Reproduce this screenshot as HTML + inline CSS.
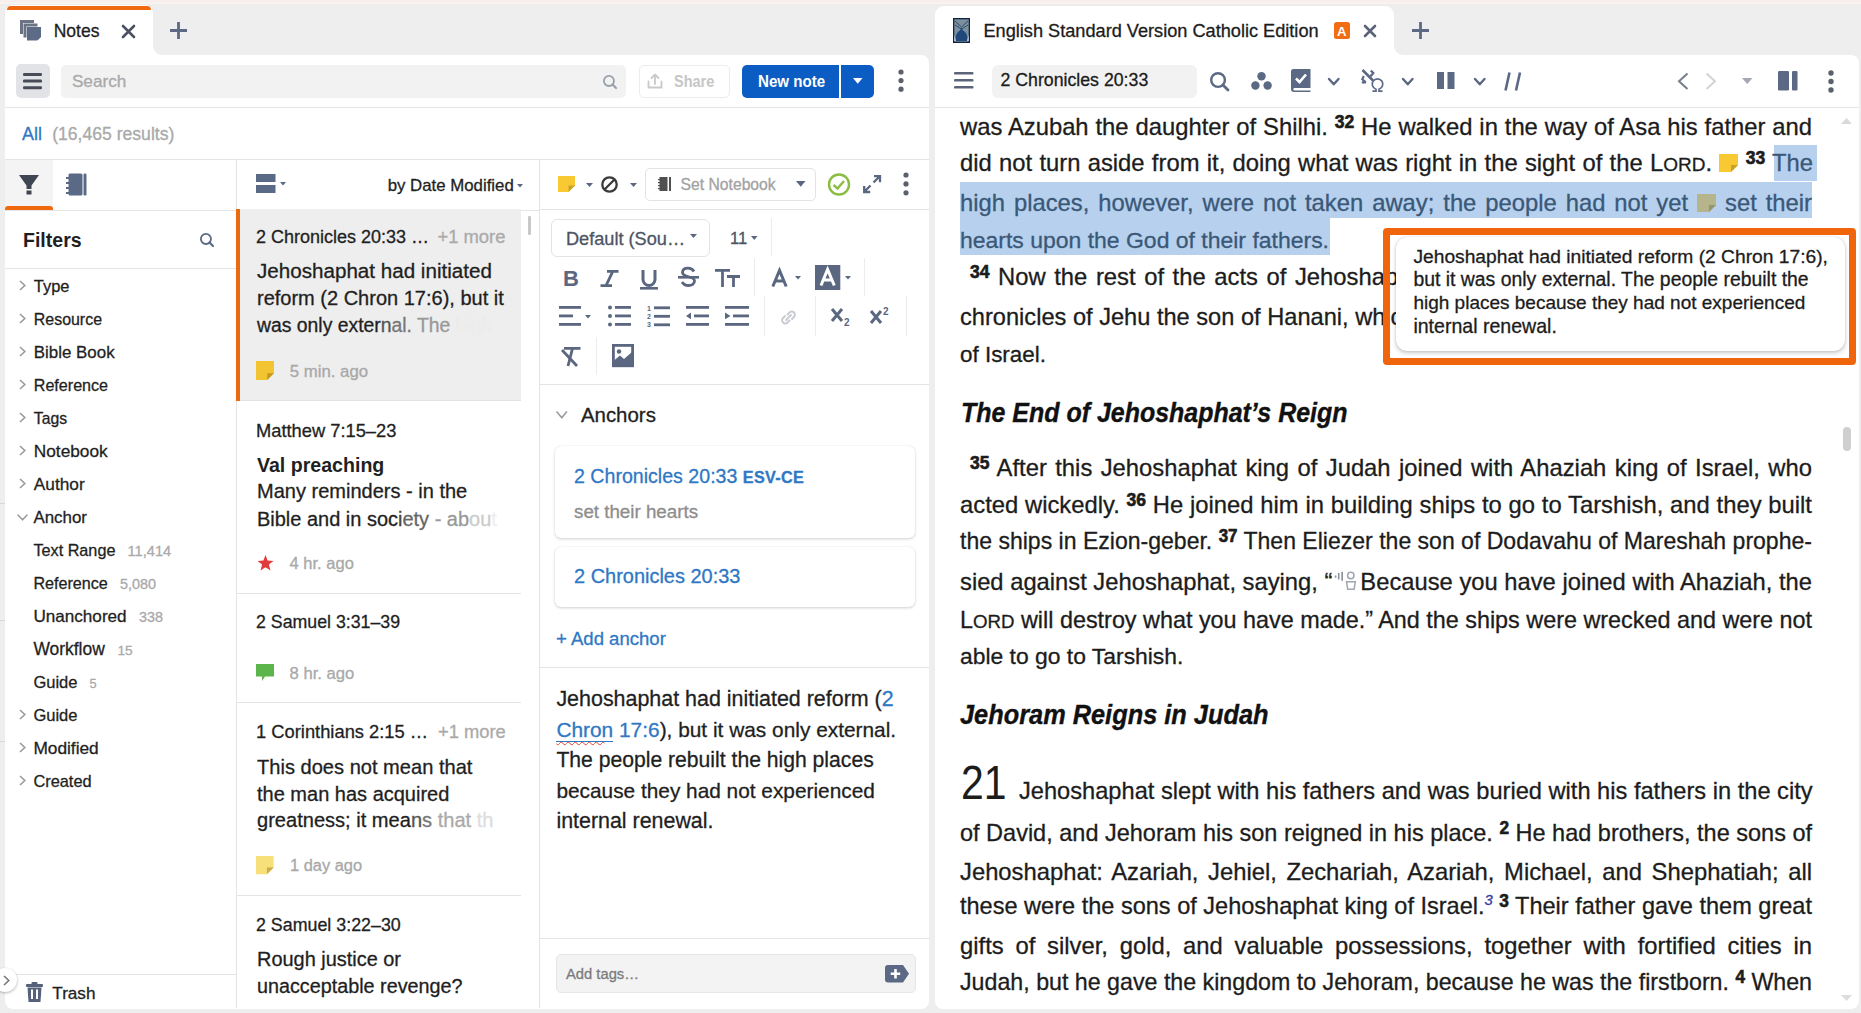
<!DOCTYPE html>
<html><head><meta charset="utf-8"><style>html,body{margin:0;padding:0}
body{width:1861px;height:1013px;position:relative;overflow:hidden;background:#eeeeee;font-family:"Liberation Sans",sans-serif}
.b{position:absolute}
.ic{position:absolute;overflow:visible}
.t{position:absolute;white-space:nowrap;line-height:1;transform-origin:0 0;-webkit-text-stroke-width:0.3px}
.bl{display:inline-block;width:0;height:0}
.sup{font-size:17.5px;font-weight:700;position:relative;top:-7px;-webkit-text-stroke-width:0.6px}
.sc{font-size:19px}
.stk{display:inline-block;position:relative;width:19px;height:0}
.stk svg{position:absolute;left:0;top:-17px}
.fn{font-style:italic;color:#3a3aa0;font-size:15px;position:relative;top:-9px}
</style></head><body>
<div class="b" style="left:0;top:0;width:1861px;height:6px;background:linear-gradient(#f9eeeb 0,#f9eeeb 1.5px,#f7f3ef 2px,#f7f3ef 3.5px,#efebe9 4px,#eeeeee 6px)"></div>
<div class="b" style="left:5px;top:55px;width:924.00px;height:954.00px;background:#fff;border-radius:0 8px 8px 8px;"></div>
<div class="b" style="left:5px;top:5px;width:148.00px;height:55.00px;background:#fff;border-radius:8px 8px 0 0;"></div>
<div class="b" style="left:7px;top:5.5px;width:144.00px;height:4.00px;background:#f0690f;border-radius:4px 4px 0 0;"></div>
<div class="b" style="left:153px;top:45px;width:12px;height:12px;background:#fff"></div>
<div class="b" style="left:153px;top:5px;width:776px;height:50px;background:#eeeeee;border-radius:0 0 0 9px"></div>
<svg class="ic" style="left:20px;top:20px;" width="23" height="21" viewBox="0 0 23 21"><rect x="0" y="0" width="14" height="14" fill="#6b7385"/><rect x="3" y="3" width="14" height="14" fill="#fff"/><rect x="3.5" y="3.5" width="14" height="14" fill="#6b7385"/><rect x="6.5" y="6.5" width="14" height="14" fill="#fff"/><path d="M7 7H21V16.5L17 20.5H7Z" fill="#5d6b87"/><path d="M21 17L17.5 20.5V17Z" fill="#5d6b87"/></svg>
<div class="t " style="left:53.70px;top:23.00px;font-size:17.53px;color:#1f1f1f;">Notes</div>
<svg class="ic" style="left:122px;top:24.5px;" width="13" height="13" viewBox="0 0 13 13"><path d="M1 1L12 12M12 1L1 12" stroke="#4b5161" stroke-width="2.6" stroke-linecap="round"/></svg>
<svg class="ic" style="left:170px;top:22px;" width="17" height="17" viewBox="0 0 17 17"><path d="M8.5 0V17M0 8.5H17" stroke="#5b6984" stroke-width="2.8"/></svg>
<div class="b" style="left:16px;top:64px;width:34px;height:34px;background:#e2e3e6;border-radius:5px"></div>
<svg class="ic" style="left:23px;top:73px;" width="19" height="17" viewBox="0 0 19 17"><rect x="0" y="0.0" width="19" height="3" rx="1.2" fill="#474c58"/><rect x="0" y="6.6" width="19" height="3" rx="1.2" fill="#474c58"/><rect x="0" y="13.2" width="19" height="3" rx="1.2" fill="#474c58"/></svg>
<div class="b" style="left:61px;top:64.5px;width:565.00px;height:33.00px;background:#f2f2f2;border-radius:5px;"></div>
<div class="t " style="left:71.90px;top:73.01px;font-size:17.20px;color:#a9a9a9;">Search</div>
<svg class="ic" style="left:602.5px;top:74.5px;" width="14" height="14" viewBox="0 0 14 14"><circle cx="5.94" cy="5.94" r="5.04" stroke="#9aa0aa" stroke-width="1.8" fill="none"/><path d="M9.5688 9.5688L13 13" stroke="#9aa0aa" stroke-width="2.2" stroke-linecap="round"/></svg>
<div class="b" style="left:638.5px;top:64.5px;width:91.00px;height:33.00px;border:1px solid #ececec;border-radius:5px;box-sizing:border-box;"></div>
<svg class="ic" style="left:647px;top:73px;" width="16" height="16" viewBox="0 0 16 16"><path d="M8 11V1.5M4.5 5L8 1.5L11.5 5" stroke="#c9c9c9" stroke-width="1.8" fill="none" stroke-linecap="round" stroke-linejoin="round"/><path d="M1.5 8.5V14.5H14.5V8.5" stroke="#c9c9c9" stroke-width="1.8" fill="none" stroke-linecap="round" stroke-linejoin="round"/></svg>
<div class="t " style="left:673.70px;top:73.50px;font-size:15.63px;color:#c6c6c6;font-weight:700;-webkit-text-stroke-width:0;transform:scaleX(0.9278);">Share</div>
<div class="b" style="left:741.5px;top:64.5px;width:97.00px;height:33.00px;background:#0b5dc4;border-radius:5px 0 0 5px;"></div>
<div class="b" style="left:841px;top:64.5px;width:32.50px;height:33.00px;background:#0b5dc4;border-radius:0 5px 5px 0;"></div>
<div class="t " style="left:757.60px;top:73.51px;font-size:16.01px;color:#ffffff;font-weight:700;-webkit-text-stroke-width:0;transform:scaleX(0.9434);">New note</div>
<svg class="ic" style="left:852.5px;top:78px;" width="9.5" height="5.8" viewBox="0 0 9.5 5.8"><path d="M0 0H9.5L4.75 5.8Z" fill="#ffffff"/></svg>
<svg class="ic" style="left:897px;top:68px;" width="8" height="26" viewBox="0 0 8 26"><circle cx="4" cy="4.0" r="2.6" fill="#5a606c"/><circle cx="4" cy="12.6" r="2.6" fill="#5a606c"/><circle cx="4" cy="21.2" r="2.6" fill="#5a606c"/></svg>
<div class="b" style="left:5px;top:107px;width:924.00px;height:1.00px;background:#e4e4e4;"></div>
<div class="t " style="left:22.00px;top:125.71px;font-size:17.90px;color:#2f78c4;">All</div>
<div class="t " style="left:52.20px;top:125.72px;font-size:17.59px;color:#a9a9a9;">(16,465 results)</div>
<div class="b" style="left:5px;top:159px;width:924.00px;height:1.00px;background:#e4e4e4;"></div>
<div class="b" style="left:236px;top:160px;width:1.00px;height:848.00px;background:#e4e4e4;"></div>
<div class="b" style="left:539px;top:160px;width:1.00px;height:848.00px;background:#e4e4e4;"></div>
<div class="b" style="left:5px;top:210px;width:534.00px;height:1.00px;background:#e4e4e4;"></div>
<div class="b" style="left:540px;top:209px;width:389.00px;height:1.00px;background:#e4e4e4;"></div>
<div class="b" style="left:5px;top:160px;width:48.00px;height:50.00px;background:#f4f4f4;"></div>
<div class="b" style="left:5px;top:206px;width:48.00px;height:4.00px;background:#f0690f;border-radius:3px 3px 0 0;"></div>
<svg class="ic" style="left:18.5px;top:174.5px;" width="20" height="20" viewBox="0 0 20 20"><path d="M0 0H20L12.5 10.5V14H7.5V10.5Z" fill="#3f4552"/><rect x="7.5" y="15.5" width="5" height="4" fill="#3f4552"/></svg>
<svg class="ic" style="left:66px;top:173px;" width="21" height="23" viewBox="0 0 21 23"><rect x="2.5" y="0.5" width="14" height="22" rx="1.5" fill="#5a6985"/><rect x="17.5" y="0.5" width="3" height="22" rx="1.2" fill="#5a6985"/><rect x="0" y="4" width="4" height="2" fill="#5a6985"/><rect x="0" y="9" width="4" height="2" fill="#5a6985"/><rect x="0" y="14" width="4" height="2" fill="#5a6985"/><rect x="0" y="19" width="4" height="2" fill="#5a6985"/></svg>
<div class="t " style="left:23.00px;top:230.91px;font-size:19.84px;color:#1f1f1f;font-weight:700;-webkit-text-stroke-width:0;transform:scaleX(0.9846);">Filters</div>
<svg class="ic" style="left:199.5px;top:232.5px;" width="14" height="14" viewBox="0 0 14 14"><circle cx="5.94" cy="5.94" r="5.04" stroke="#5b6984" stroke-width="1.8" fill="none"/><path d="M9.5688 9.5688L13 13" stroke="#5b6984" stroke-width="2.2" stroke-linecap="round"/></svg>
<div class="b" style="left:5px;top:268px;width:231.00px;height:1.00px;background:#e4e4e4;"></div>
<div class="t " style="left:33.80px;top:277.91px;font-size:16.48px;color:#1f1f1f;">Type</div>
<svg class="ic" style="left:19px;top:280.4px;" width="7" height="11" viewBox="0 0 7 11"><path d="M1 1L5.8 5.5L1 10" stroke="#9b9b9b" stroke-width="1.6" fill="none"/></svg>
<div class="t " style="left:33.80px;top:311.91px;font-size:15.95px;color:#1f1f1f;">Resource</div>
<svg class="ic" style="left:19px;top:313.4px;" width="7" height="11" viewBox="0 0 7 11"><path d="M1 1L5.8 5.5L1 10" stroke="#9b9b9b" stroke-width="1.6" fill="none"/></svg>
<div class="t " style="left:33.80px;top:344.90px;font-size:16.92px;color:#1f1f1f;">Bible Book</div>
<svg class="ic" style="left:19px;top:346.4px;" width="7" height="11" viewBox="0 0 7 11"><path d="M1 1L5.8 5.5L1 10" stroke="#9b9b9b" stroke-width="1.6" fill="none"/></svg>
<div class="t " style="left:33.80px;top:376.91px;font-size:16.10px;color:#1f1f1f;">Reference</div>
<svg class="ic" style="left:19px;top:379.4px;" width="7" height="11" viewBox="0 0 7 11"><path d="M1 1L5.8 5.5L1 10" stroke="#9b9b9b" stroke-width="1.6" fill="none"/></svg>
<div class="t " style="left:33.80px;top:410.90px;font-size:15.73px;color:#1f1f1f;">Tags</div>
<svg class="ic" style="left:19px;top:412.4px;" width="7" height="11" viewBox="0 0 7 11"><path d="M1 1L5.8 5.5L1 10" stroke="#9b9b9b" stroke-width="1.6" fill="none"/></svg>
<div class="t " style="left:33.80px;top:442.91px;font-size:17.28px;color:#1f1f1f;">Notebook</div>
<svg class="ic" style="left:19px;top:445.4px;" width="7" height="11" viewBox="0 0 7 11"><path d="M1 1L5.8 5.5L1 10" stroke="#9b9b9b" stroke-width="1.6" fill="none"/></svg>
<div class="t " style="left:33.80px;top:475.91px;font-size:17.26px;color:#1f1f1f;">Author</div>
<svg class="ic" style="left:19px;top:478.4px;" width="7" height="11" viewBox="0 0 7 11"><path d="M1 1L5.8 5.5L1 10" stroke="#9b9b9b" stroke-width="1.6" fill="none"/></svg>
<div class="t " style="left:33.40px;top:509.90px;font-size:16.93px;color:#1f1f1f;">Anchor</div>
<svg class="ic" style="left:17px;top:513.9px;" width="11" height="7" viewBox="0 0 11 7"><path d="M1 1L5.5 5.8L10 1" stroke="#9b9b9b" stroke-width="1.6" fill="none" stroke-linecap="round" stroke-linejoin="round"/></svg>
<div class="t " style="left:33.40px;top:541.91px;font-size:16.23px;color:#1f1f1f;">Text Range</div>
<div class="t " style="left:127.60px;top:543.91px;font-size:14.58px;color:#a9a9a9;">11,414</div>
<div class="t " style="left:33.40px;top:574.90px;font-size:16.14px;color:#1f1f1f;">Reference</div>
<div class="t " style="left:120.00px;top:576.91px;font-size:14.38px;color:#a9a9a9;">5,080</div>
<div class="t " style="left:33.40px;top:607.90px;font-size:17.12px;color:#1f1f1f;">Unanchored</div>
<div class="t " style="left:139.00px;top:609.91px;font-size:14.38px;color:#a9a9a9;">338</div>
<div class="t " style="left:33.40px;top:640.91px;font-size:17.46px;color:#1f1f1f;">Workflow</div>
<div class="t " style="left:117.50px;top:643.91px;font-size:13.66px;color:#a9a9a9;">15</div>
<div class="t " style="left:33.40px;top:674.91px;font-size:16.54px;color:#1f1f1f;">Guide</div>
<div class="t " style="left:89.60px;top:677.90px;font-size:12.76px;color:#a9a9a9;">5</div>
<div class="t " style="left:33.40px;top:707.91px;font-size:16.54px;color:#1f1f1f;">Guide</div>
<svg class="ic" style="left:19px;top:709.4px;" width="7" height="11" viewBox="0 0 7 11"><path d="M1 1L5.8 5.5L1 10" stroke="#9b9b9b" stroke-width="1.6" fill="none"/></svg>
<div class="t " style="left:33.40px;top:739.91px;font-size:17.29px;color:#1f1f1f;">Modified</div>
<svg class="ic" style="left:19px;top:742.4px;" width="7" height="11" viewBox="0 0 7 11"><path d="M1 1L5.8 5.5L1 10" stroke="#9b9b9b" stroke-width="1.6" fill="none"/></svg>
<div class="t " style="left:33.40px;top:772.91px;font-size:16.37px;color:#1f1f1f;">Created</div>
<svg class="ic" style="left:19px;top:775.4px;" width="7" height="11" viewBox="0 0 7 11"><path d="M1 1L5.8 5.5L1 10" stroke="#9b9b9b" stroke-width="1.6" fill="none"/></svg>
<div class="b" style="left:5px;top:974px;width:231.00px;height:1.00px;background:#e4e4e4;"></div>
<svg class="ic" style="left:26px;top:982px;" width="17" height="20" viewBox="0 0 17 20"><rect x="0" y="2" width="17" height="3" rx="1" fill="#56627a"/><rect x="5.5" y="0" width="6" height="3" rx="1" fill="#56627a"/><path d="M1.5 5.5H15.5L14.5 20H2.5Z" fill="#56627a"/><rect x="5" y="7.5" width="2" height="9.5" fill="#fff"/><rect x="10" y="7.5" width="2" height="9.5" fill="#fff"/></svg>
<div class="t " style="left:52.30px;top:984.70px;font-size:17.15px;color:#1f1f1f;">Trash</div>
<div class="b" style="left:-7px;top:968px;width:24px;height:24px;border-radius:50%;background:#fff;box-shadow:0 1px 3px rgba(0,0,0,0.3)"></div>
<svg class="ic" style="left:3px;top:974.5px;" width="7" height="11" viewBox="0 0 7 11"><path d="M1 1L5.8 5.5L1 10" stroke="#777" stroke-width="1.6" fill="none"/></svg>
<div class="b" style="left:0px;top:503px;width:5.00px;height:1.00px;background:#d8d8d8;"></div>
<div class="b" style="left:0px;top:620px;width:5.00px;height:1.00px;background:#d8d8d8;"></div>
<div class="b" style="left:0px;top:741px;width:5.00px;height:1.00px;background:#d8d8d8;"></div>
<svg class="ic" style="left:255.7px;top:173.7px;" width="19.5" height="19" viewBox="0 0 19.5 19"><rect x="0" y="0" width="19.5" height="8" fill="#5a6985"/><rect x="0" y="11" width="19.5" height="8" fill="#5a6985"/></svg>
<svg class="ic" style="left:280px;top:182px;" width="6" height="3.5" viewBox="0 0 6 3.5"><path d="M0 0H6L3.0 3.5Z" fill="#5a6985"/></svg>
<div class="t " style="left:387.70px;top:177.81px;font-size:16.81px;color:#1f1f1f;">by Date Modified</div>
<svg class="ic" style="left:517px;top:184px;" width="6" height="3.5" viewBox="0 0 6 3.5"><path d="M0 0H6L3.0 3.5Z" fill="#5a6985"/></svg>
<div class="b" style="left:236px;top:209px;width:285.00px;height:192.00px;background:#eeeeee;border-bottom:1px solid #e2e2e2;box-sizing:border-box;"></div>
<div class="b" style="left:236px;top:209px;width:4.00px;height:192.00px;background:#ea6a12;"></div>
<div class="b" style="left:528px;top:216px;width:2.50px;height:19.00px;background:#c8c8c8;border-radius:1px;"></div>
<div class="t " style="left:256.00px;top:228.40px;font-size:18.01px;color:#1f1f1f;">2 Chronicles 20:33 …</div>
<div class="t " style="left:437.40px;top:228.42px;font-size:18.41px;color:#aaaaaa;">+1 more</div>
<div class="t " style="left:257.00px;top:260.80px;font-size:20.62px;color:#1f1f1f;">Jehoshaphat had initiated</div>
<div class="t " style="left:257.00px;top:287.51px;font-size:20.00px;color:#1f1f1f;">reform (2 Chron 17:6), but it</div>
<div class="t " style="left:257.00px;top:315.81px;font-size:19.37px;color:#1f1f1f;">was only exter<span style="color:#555">n</span><span style="color:#777">al.</span> <span style="color:#999">The</span> <span style="color:#ececec">high</span></div>
<svg class="ic" style="left:256px;top:361px;" width="18" height="19" viewBox="0 0 18 19"><path d="M0 0H18V12.16L11.16 19H0Z" fill="#f2c431"/><path d="M18 12.16L11.16 19V12.16Z" fill="#c49a20"/></svg>
<div class="t " style="left:289.80px;top:363.80px;font-size:16.76px;color:#a8a8a8;">5 min. ago</div>
<div class="t " style="left:256.00px;top:421.50px;font-size:18.31px;color:#1f1f1f;">Matthew 7:15–23</div>
<div class="t " style="left:257.00px;top:455.90px;font-size:19.59px;color:#1f1f1f;font-weight:700;-webkit-text-stroke-width:0;">Val preaching</div>
<div class="t " style="left:257.00px;top:481.21px;font-size:20.03px;color:#1f1f1f;">Many reminders - in the</div>
<div class="t " style="left:257.00px;top:508.61px;font-size:19.98px;color:#1f1f1f;">Bible and in soc<span style="color:#444">i</span><span style="color:#666">ety</span> <span style="color:#999">- ab</span><span style="color:#ccc">ou</span><span style="color:#eee">t</span></div>
<svg class="ic" style="left:256.5px;top:555px;" width="17" height="16" viewBox="0 0 17 16"><path d="M8.5 0L10.6 5.5L16.5 5.9L11.9 9.6L13.5 15.5L8.5 12.2L3.5 15.5L5.1 9.6L0.5 5.9L6.4 5.5Z" fill="#e23b3b"/></svg>
<div class="t " style="left:289.60px;top:555.01px;font-size:16.51px;color:#a8a8a8;">4 hr. ago</div>
<div class="b" style="left:236px;top:593px;width:285.00px;height:1.00px;background:#e4e4e4;"></div>
<div class="t " style="left:256.00px;top:614.41px;font-size:17.76px;color:#1f1f1f;">2 Samuel 3:31–39</div>
<svg class="ic" style="left:256px;top:664px;" width="18" height="18" viewBox="0 0 18 18"><path d="M0 0H18V12.5H9L6 17V12.5H0Z" fill="#5cb54a"/></svg>
<div class="t " style="left:289.60px;top:665.80px;font-size:16.64px;color:#a8a8a8;">8 hr. ago</div>
<div class="b" style="left:236px;top:702px;width:285.00px;height:1.00px;background:#e4e4e4;"></div>
<div class="t " style="left:256.00px;top:723.30px;font-size:18.33px;color:#1f1f1f;">1 Corinthians 2:15 …</div>
<div class="t " style="left:438.00px;top:723.32px;font-size:18.33px;color:#aaaaaa;">+1 more</div>
<div class="t " style="left:257.00px;top:756.60px;font-size:20.09px;color:#1f1f1f;">This does not mean that</div>
<div class="t " style="left:257.00px;top:783.60px;font-size:20.01px;color:#1f1f1f;">the man has acquired</div>
<div class="t " style="left:257.00px;top:810.41px;font-size:20.07px;color:#1f1f1f;">greatness; it mea<span style="color:#555">n</span><span style="color:#777">s</span> <span style="color:#aaa">that</span> <span style="color:#ddd">th</span></div>
<svg class="ic" style="left:256.3px;top:856px;" width="17.6" height="18.3" viewBox="0 0 17.6 18.3"><path d="M0 0H17.6V11.612L10.912 18.3H0Z" fill="#f7df7a"/><path d="M17.6 11.612L10.912 18.3V11.612Z" fill="#c9ae4a"/></svg>
<div class="t " style="left:290.00px;top:857.41px;font-size:16.41px;color:#a8a8a8;">1 day ago</div>
<div class="b" style="left:236px;top:895px;width:285.00px;height:1.00px;background:#e4e4e4;"></div>
<div class="t " style="left:256.00px;top:916.91px;font-size:17.83px;color:#1f1f1f;">2 Samuel 3:22–30</div>
<div class="t " style="left:257.00px;top:950.11px;font-size:19.93px;color:#1f1f1f;">Rough justice or</div>
<div class="t " style="left:257.00px;top:976.50px;font-size:19.78px;color:#1f1f1f;">unacceptable revenge?</div>
<svg class="ic" style="left:558px;top:176px;" width="17" height="16" viewBox="0 0 17 16"><path d="M0 0H17V9.54L10.54 16H0Z" fill="#f9c934"/><path d="M17 9.54L10.54 16V9.54Z" fill="#c9a227"/></svg>
<svg class="ic" style="left:586px;top:183px;" width="7" height="4" viewBox="0 0 7 4"><path d="M0 0H7L3.5 4Z" fill="#5b6780"/></svg>
<svg class="ic" style="left:601px;top:176px;" width="17" height="17" viewBox="0 0 17 17"><circle cx="8.5" cy="8.5" r="7.2" stroke="#3a3a3a" stroke-width="2.3" fill="none"/><path d="M3.5 13.5L13.5 3.5" stroke="#3a3a3a" stroke-width="2.3"/></svg>
<svg class="ic" style="left:630px;top:183px;" width="7" height="4" viewBox="0 0 7 4"><path d="M0 0H7L3.5 4Z" fill="#5b6780"/></svg>
<div class="b" style="left:645.3px;top:167.5px;width:171.00px;height:33.10px;border:1px solid #e3e3e3;border-radius:5px;box-sizing:border-box;"></div>
<svg class="ic" style="left:657.5px;top:177px;" width="14" height="14" viewBox="0 0 14 14"><rect x="1.5" y="0" width="8" height="14" fill="#505050"/><rect x="11" y="0" width="2" height="14" fill="#505050"/><rect x="0" y="2" width="2.5" height="1.2" fill="#505050"/><rect x="0" y="5" width="2.5" height="1.2" fill="#505050"/><rect x="0" y="8" width="2.5" height="1.2" fill="#505050"/><rect x="0" y="11" width="2.5" height="1.2" fill="#505050"/></svg>
<div class="t " style="left:680.60px;top:176.71px;font-size:15.69px;color:#a2a2a2;">Set Notebook</div>
<svg class="ic" style="left:796px;top:181px;" width="9.5" height="5.7" viewBox="0 0 9.5 5.7"><path d="M0 0H9.5L4.75 5.7Z" fill="#5b6780"/></svg>
<svg class="ic" style="left:827.5px;top:172.5px;" width="22" height="23" viewBox="0 0 22 23"><circle cx="11" cy="11.5" r="10" stroke="#8cbd43" stroke-width="2.4" fill="none"/><path d="M5.5 12L9.5 15.5L16 8" stroke="#8cbd43" stroke-width="2.4" fill="none"/></svg>
<svg class="ic" style="left:863px;top:175px;" width="18" height="18" viewBox="0 0 18 18"><path d="M10.5 7.5L16.5 1.5M11 1.2H17V7.2" stroke="#5b6780" stroke-width="2.3" fill="none"/><path d="M7.5 10.5L1.5 16.5M1.2 11V17H7.2" stroke="#5b6780" stroke-width="2.3" fill="none"/></svg>
<svg class="ic" style="left:901.6px;top:171px;" width="8" height="26" viewBox="0 0 8 26"><circle cx="4" cy="4.0" r="2.6" fill="#5a606c"/><circle cx="4" cy="12.9" r="2.6" fill="#5a606c"/><circle cx="4" cy="21.8" r="2.6" fill="#5a606c"/></svg>
<div class="b" style="left:551.4px;top:218.5px;width:158.80px;height:38.50px;border:1px solid #e3e3e3;border-radius:6px;box-sizing:border-box;"></div>
<div class="t " style="left:566.00px;top:229.91px;font-size:18.16px;color:#4d5462;">Default (Sou…</div>
<svg class="ic" style="left:690px;top:234px;" width="7" height="4" viewBox="0 0 7 4"><path d="M0 0H7L3.5 4Z" fill="#5b6780"/></svg>
<div class="t " style="left:730.00px;top:231.31px;font-size:16.58px;color:#4d5462;">11</div>
<svg class="ic" style="left:751.3px;top:236px;" width="6.5" height="4" viewBox="0 0 6.5 4"><path d="M0 0H6.5L3.25 4Z" fill="#5b6780"/></svg>
<div class="b" style="left:771.4px;top:218px;width:1.00px;height:38.00px;background:#ececec;"></div>
<div class="b" style="left:753.9px;top:257.5px;width:1.00px;height:38.00px;background:#ececec;"></div>
<div class="b" style="left:863.6px;top:257.5px;width:1.00px;height:38.00px;background:#ececec;"></div>
<div class="b" style="left:763.7px;top:295.5px;width:1.00px;height:40.20px;background:#ececec;"></div>
<div class="b" style="left:814.7px;top:295.5px;width:1.00px;height:40.20px;background:#ececec;"></div>
<div class="b" style="left:905.9px;top:295.5px;width:1.00px;height:40.20px;background:#ececec;"></div>
<div class="b" style="left:596px;top:336.8px;width:1.00px;height:38.00px;background:#ececec;"></div>
<svg class="ic" style="left:562.8px;top:269.5px;" width="15" height="17" viewBox="0 0 15 17"><text x="0" y="16.3" font-family="Liberation Sans" font-weight="700" font-size="22" fill="#5b6780">B</text></svg>
<svg class="ic" style="left:600px;top:269.5px;" width="19" height="17" viewBox="0 0 19 17"><path d="M7 1.3H18.5M0.5 15.7H12M12.8 1.3L6 15.7" stroke="#5b6780" stroke-width="2.8" fill="none"/></svg>
<svg class="ic" style="left:639.5px;top:269.5px;" width="18" height="20" viewBox="0 0 18 20"><path d="M3 0V9.5A6 6 0 0 0 15 9.5V0" stroke="#5b6780" stroke-width="3" fill="none"/><rect x="0" y="17" width="18" height="2.6" fill="#5b6780"/></svg>
<svg class="ic" style="left:677.5px;top:266.5px;" width="21" height="20" viewBox="0 0 21 20"><path d="M16 4.5C14.5 1.8 12.5 1.2 10 1.2C6.5 1.2 4.5 3 4.5 5.5C4.5 11 16.5 8.5 16.5 14C16.5 16.8 14 18.5 10.5 18.5C7.5 18.5 5.5 17.5 4 15" stroke="#5b6780" stroke-width="2.8" fill="none"/><rect x="0" y="9" width="21" height="2.6" fill="#5b6780"/></svg>
<svg class="ic" style="left:714.5px;top:269px;" width="26" height="19" viewBox="0 0 26 19"><path d="M0 1.3H15M7.5 1.3V18" stroke="#5b6780" stroke-width="2.8"/><path d="M12 7.5H25M18.5 7.5V18" stroke="#5b6780" stroke-width="2.8"/></svg>
<svg class="ic" style="left:772px;top:269.5px;" width="15" height="17" viewBox="0 0 15 17"><path d="M0.8 16.5L7.5 0.5L14.2 16.5M3.5 11H11.5" stroke="#5b6780" stroke-width="3" fill="none"/></svg>
<svg class="ic" style="left:795px;top:276px;" width="6" height="3.5" viewBox="0 0 6 3.5"><path d="M0 0H6L3.0 3.5Z" fill="#5b6780"/></svg>
<svg class="ic" style="left:814.7px;top:264.7px;" width="25.3" height="25" viewBox="0 0 25.3 25"><rect width="25.3" height="25" fill="#5b6780"/><path d="M6 20.5L12.6 4.5L19.3 20.5M8.8 15H16.5" stroke="#fff" stroke-width="3" fill="none"/></svg>
<svg class="ic" style="left:845px;top:276px;" width="6" height="3.5" viewBox="0 0 6 3.5"><path d="M0 0H6L3.0 3.5Z" fill="#5b6780"/></svg>
<svg class="ic" style="left:559px;top:306.4px;" width="23" height="20" viewBox="0 0 23 20"><rect x="0" y="0" width="22" height="2.8" fill="#5b6780"/><rect x="0" y="8.5" width="14" height="2.8" fill="#5b6780"/><rect x="0" y="17" width="22" height="2.8" fill="#5b6780"/></svg>
<svg class="ic" style="left:584.5px;top:315px;" width="6" height="3.5" viewBox="0 0 6 3.5"><path d="M0 0H6L3.0 3.5Z" fill="#5b6780"/></svg>
<svg class="ic" style="left:607.8px;top:306.4px;" width="23" height="20" viewBox="0 0 23 20"><circle cx="2" cy="1.5" r="2" fill="#5b6780"/><circle cx="2" cy="10" r="2" fill="#5b6780"/><circle cx="2" cy="18.5" r="2" fill="#5b6780"/><rect x="7" y="0" width="16" height="2.8" fill="#5b6780"/><rect x="7" y="8.5" width="16" height="2.8" fill="#5b6780"/><rect x="7" y="17" width="16" height="2.8" fill="#5b6780"/></svg>
<svg class="ic" style="left:646.8px;top:305px;" width="23" height="22" viewBox="0 0 23 22"><text x="0" y="6" font-family="Liberation Sans" font-weight="700" font-size="7" fill="#5b6780">1</text><text x="0" y="14" font-family="Liberation Sans" font-weight="700" font-size="7" fill="#5b6780">2</text><text x="0" y="22" font-family="Liberation Sans" font-weight="700" font-size="7" fill="#5b6780">3</text><rect x="7" y="1.4" width="16" height="2.8" fill="#5b6780"/><rect x="7" y="9.9" width="16" height="2.8" fill="#5b6780"/><rect x="7" y="18.4" width="16" height="2.8" fill="#5b6780"/></svg>
<svg class="ic" style="left:685.9px;top:306.4px;" width="23" height="20" viewBox="0 0 23 20"><rect x="0" y="0" width="23" height="2.8" fill="#5b6780"/><rect x="8" y="8.5" width="15" height="2.8" fill="#5b6780"/><rect x="0" y="17" width="23" height="2.8" fill="#5b6780"/><path d="M0 9.9L5 6.5V13.3Z" fill="#5b6780"/></svg>
<svg class="ic" style="left:725px;top:306.4px;" width="24" height="20" viewBox="0 0 24 20"><rect x="0" y="0" width="24" height="2.8" fill="#5b6780"/><rect x="8" y="8.5" width="16" height="2.8" fill="#5b6780"/><rect x="0" y="17" width="24" height="2.8" fill="#5b6780"/><path d="M5.5 9.9L0 6.5V13.3Z" fill="#5b6780"/></svg>
<svg class="ic" style="left:780px;top:308.6px;" width="17" height="17" viewBox="0 0 17 17"><path d="M7.5 5.5L9.5 3.5A3 3 0 0 1 14 8L12 10M9.5 11.5L7.5 13.5A3 3 0 0 1 3 9L5 7M6 11L11 6" stroke="#c8ccd4" stroke-width="2" fill="none" stroke-linecap="round"/></svg>
<svg class="ic" style="left:831px;top:307px;" width="22" height="20" viewBox="0 0 22 20"><path d="M1 2L11 14M11 2L1 14" stroke="#5b6780" stroke-width="3"/><text x="13" y="19" font-family="Liberation Sans" font-weight="700" font-size="10" fill="#5b6780">2</text></svg>
<svg class="ic" style="left:870px;top:305px;" width="22" height="20" viewBox="0 0 22 20"><path d="M1 6L11 18M11 6L1 18" stroke="#5b6780" stroke-width="3"/><text x="13" y="10" font-family="Liberation Sans" font-weight="700" font-size="10" fill="#5b6780">2</text></svg>
<svg class="ic" style="left:560.6px;top:346.6px;" width="21" height="20" viewBox="0 0 21 20"><path d="M3 1.4H19.5M11.5 1.4L7 19" stroke="#5b6780" stroke-width="2.8"/><path d="M1 3L16 19" stroke="#5b6780" stroke-width="2.8"/></svg>
<svg class="ic" style="left:611.7px;top:344.4px;" width="22" height="23.2" viewBox="0 0 22 23.2"><rect x="1.4" y="1.4" width="19.2" height="20.4" stroke="#5b6780" stroke-width="2.8" fill="none"/><circle cx="7" cy="7.5" r="2.2" fill="#5b6780"/><path d="M1.4 21.8V17L8 11.5L12 15L20.6 7.5V21.8Z" fill="#5b6780"/></svg>
<div class="b" style="left:540px;top:384px;width:389.00px;height:1.00px;background:#e4e4e4;"></div>
<svg class="ic" style="left:555.5px;top:411px;" width="11.5" height="8" viewBox="0 0 11.5 8"><path d="M1 1L5.75 6.8L10.5 1" stroke="#9aa0a8" stroke-width="1.7" fill="none" stroke-linecap="round" stroke-linejoin="round"/></svg>
<div class="t " style="left:580.90px;top:405.11px;font-size:20.45px;color:#1f1f1f;">Anchors</div>
<div class="b" style="left:555.2px;top:445.6px;width:359.40px;height:92.60px;background:#fff;border-radius:6px;box-shadow:0 1px 3px rgba(0,0,0,0.18),0 0 1px rgba(0,0,0,0.12);"></div>
<div class="b" style="left:555.2px;top:546.5px;width:359.40px;height:60.30px;background:#fff;border-radius:6px;box-shadow:0 1px 3px rgba(0,0,0,0.18),0 0 1px rgba(0,0,0,0.12);"></div>
<div class="t " style="left:574.00px;top:466.91px;font-size:19.97px;color:#2f78c4;transform:scaleX(0.9819);">2 Chronicles 20:33 <span style="font-size:16.5px;font-weight:700;letter-spacing:0.3px">ESV-CE</span></div>
<div class="t " style="left:574.00px;top:502.51px;font-size:18.75px;color:#8d8d8d;">set their hearts</div>
<div class="t " style="left:574.00px;top:567.00px;font-size:19.96px;color:#2f78c4;">2 Chronicles 20:33</div>
<div class="t " style="left:556.00px;top:629.61px;font-size:18.56px;color:#2f78c4;">+ Add anchor</div>
<div class="b" style="left:540px;top:666.5px;width:389.00px;height:1.00px;background:#e4e4e4;"></div>
<div class="t " style="left:556.40px;top:689.00px;font-size:21.45px;color:#1f1f1f;">Jehoshaphat had initiated reform (<span style="color:#2f78c4">2</span></div>
<div class="t " style="left:556.40px;top:719.71px;font-size:20.86px;color:#1f1f1f;"><span style="color:#2f78c4;position:relative">Chron<span style="position:absolute;left:0;right:0;bottom:-1px;height:1px;background:#2f78c4"></span><span style="position:absolute;left:0;right:0;bottom:-5px;height:4px;overflow:hidden"><span style="display:block;text-decoration:underline wavy #d43;text-decoration-thickness:1px;color:transparent;line-height:0;font-size:12px;margin-top:-6px">xxxxxxxx</span></span></span><span style="color:#2f78c4"> 17:6</span>), but it was only external.</div>
<div class="t " style="left:556.40px;top:749.00px;font-size:21.15px;color:#1f1f1f;">The people rebuilt the high places</div>
<div class="t " style="left:556.40px;top:780.60px;font-size:20.84px;color:#1f1f1f;">because they had not experienced</div>
<div class="t " style="left:556.40px;top:811.32px;font-size:21.42px;color:#1f1f1f;">internal renewal.</div>
<div class="b" style="left:540px;top:937.5px;width:389.00px;height:1.00px;background:#e4e4e4;"></div>
<div class="b" style="left:555.7px;top:954.4px;width:360.60px;height:38.40px;background:#f3f3f3;border:1px solid #e6e6e6;border-radius:5px;box-sizing:border-box;"></div>
<div class="t " style="left:566.00px;top:966.81px;font-size:14.75px;color:#7b7b7b;">Add tags…</div>
<svg class="ic" style="left:885px;top:965px;" width="24" height="17.5" viewBox="0 0 24 17.5"><path d="M3 0H18L24 8.75L18 17.5H3A3 3 0 0 1 0 14.5V3A3 3 0 0 1 3 0Z" fill="#5b6984"/><path d="M10.5 4V13.5M5.75 8.75H15.25" stroke="#fff" stroke-width="2.6"/></svg>
<div class="b" style="left:935px;top:55px;width:924.00px;height:954.00px;background:#fff;border-radius:0 8px 8px 8px;"></div>
<div class="b" style="left:935px;top:5.5px;width:459.00px;height:54.50px;background:#fff;border-radius:9px 9px 0 0;"></div>
<div class="b" style="left:1394px;top:45px;width:12px;height:12px;background:#fff"></div>
<div class="b" style="left:1394px;top:5px;width:467px;height:50px;background:#eeeeee;border-radius:0 0 0 9px"></div>
<svg class="ic" style="left:953px;top:18px;" width="17" height="25" viewBox="0 0 17 25"><rect width="17" height="25" fill="#10243f"/><rect x="1.3" y="1.3" width="14.4" height="22.4" fill="#7d90a0"/><path d="M2 3L8.5 9L15 3M2 7L8.5 11L15 7" stroke="#2d4a6a" stroke-width="1" fill="none"/><path d="M3 23C1.8 18 3.5 14.5 7 12.5L8.5 9.5L10 12.5C13.5 14.5 15.2 18 14 23Z" fill="#20487c"/><path d="M1.3 17L3 23H1.3ZM15.7 17L14 23H15.7Z" fill="#c9d3dc"/></svg>
<div class="t " style="left:983.50px;top:21.50px;font-size:18.16px;color:#1c1c1c;">English Standard Version Catholic Edition</div>
<div class="b" style="left:1334px;top:22px;width:15.5px;height:16.7px;background:#f26c14;border-radius:2.5px"></div>
<div class="t " style="left:1337.20px;top:24.51px;font-size:13.09px;color:#fff;font-weight:700;-webkit-text-stroke-width:0;transform:scaleX(1.0050);">A</div>
<svg class="ic" style="left:1364px;top:25px;" width="12" height="12" viewBox="0 0 12 12"><path d="M1 1L11 11M11 1L1 11" stroke="#5a6377" stroke-width="2.6" stroke-linecap="round"/></svg>
<svg class="ic" style="left:1412px;top:22px;" width="17" height="17" viewBox="0 0 17 17"><path d="M8.5 0V17M0 8.5H17" stroke="#5b6984" stroke-width="2.8"/></svg>
<svg class="ic" style="left:954px;top:72px;" width="19.5" height="17" viewBox="0 0 19.5 17"><rect x="0" y="0" width="19.5" height="2.6" rx="1.2" fill="#5b6478"/><rect x="0" y="7" width="19.5" height="2.6" rx="1.2" fill="#5b6478"/><rect x="0" y="14" width="19.5" height="2.6" rx="1.2" fill="#5b6478"/></svg>
<div class="b" style="left:992.2px;top:64.5px;width:205.10px;height:33.00px;background:#f2f2f2;border-radius:6px;"></div>
<div class="t " style="left:1000.50px;top:71.61px;font-size:17.73px;color:#1c1c1c;">2 Chronicles 20:33</div>
<svg class="ic" style="left:1210px;top:72px;" width="19" height="19" viewBox="0 0 19 19"><circle cx="8.04" cy="8.04" r="6.84" stroke="#5b6984" stroke-width="2.4" fill="none"/><path d="M12.964799999999999 12.964799999999999L18 18" stroke="#5b6984" stroke-width="2.8" stroke-linecap="round"/></svg>
<svg class="ic" style="left:1250.5px;top:71.5px;" width="21" height="18" viewBox="0 0 21 18"><circle cx="10.5" cy="4.3" r="4.2" fill="#5b6984"/><circle cx="4.4" cy="13.5" r="4.2" fill="#5b6984"/><circle cx="16.6" cy="13.5" r="4.2" fill="#5b6984"/></svg>
<svg class="ic" style="left:1290.5px;top:69px;" width="19.5" height="23" viewBox="0 0 19.5 23"><path d="M2.5 0H19.5V19H3.5A1.2 1.2 0 0 0 3.5 21.4H19.5V23H3A3 3 0 0 1 0 20V2.5A2.5 2.5 0 0 1 2.5 0Z" fill="#5b6984"/><path d="M5 9.5L8.5 13L15 5.5" stroke="#fff" stroke-width="2.6" fill="none"/></svg>
<svg class="ic" style="left:1327.5px;top:77.5px;" width="11.5" height="7.5" viewBox="0 0 11.5 7.5"><path d="M1 1L5.75 6.3L10.5 1" stroke="#5b6984" stroke-width="2.4" fill="none" stroke-linecap="round" stroke-linejoin="round"/></svg>
<svg class="ic" style="left:1355px;top:62px;" width="40" height="36" viewBox="0 0 40 36"><path d="M7.5 8L18 18.5" stroke="#5b6984" stroke-width="2.6" fill="none"/><path d="M15.8 8.5L18.3 11L15.5 14.2" stroke="#5b6984" stroke-width="2.3" fill="none"/><path d="M8.8 14L7.3 17.2L10.8 20.2M6.8 20.4H11" stroke="#5b6984" stroke-width="2.1" fill="none"/><path d="M17.5 29.2H21V27.2A5.3 5.3 0 1 1 24 27.2V29.2H27.5" stroke="#5b6984" stroke-width="1.7" fill="none"/></svg>
<svg class="ic" style="left:1402px;top:77.5px;" width="11.5" height="7.5" viewBox="0 0 11.5 7.5"><path d="M1 1L5.75 6.3L10.5 1" stroke="#5b6984" stroke-width="2.4" fill="none" stroke-linecap="round" stroke-linejoin="round"/></svg>
<svg class="ic" style="left:1437px;top:72.4px;" width="17.5" height="17" viewBox="0 0 17.5 17"><rect x="0" y="0" width="7" height="17" fill="#5b6984"/><rect x="10.5" y="0" width="7" height="17" fill="#5b6984"/></svg>
<svg class="ic" style="left:1474.3px;top:77.5px;" width="11.5" height="7.5" viewBox="0 0 11.5 7.5"><path d="M1 1L5.75 6.3L10.5 1" stroke="#5b6984" stroke-width="2.4" fill="none" stroke-linecap="round" stroke-linejoin="round"/></svg>
<svg class="ic" style="left:1504px;top:72px;" width="17.5" height="19" viewBox="0 0 17.5 19"><path d="M5.5 0.5L1.5 18.5M16 0.5L12 18.5" stroke="#5b6984" stroke-width="2.6"/></svg>
<svg class="ic" style="left:1676.5px;top:72px;" width="12" height="18.5" viewBox="0 0 12 18.5"><path d="M10.5 1.5L2 9.25L10.5 17" stroke="#777e8a" stroke-width="2" fill="none"/></svg>
<svg class="ic" style="left:1705px;top:72px;" width="12" height="18.5" viewBox="0 0 12 18.5"><path d="M1.5 1.5L10 9.25L1.5 17" stroke="#d0d3d8" stroke-width="2" fill="none"/></svg>
<svg class="ic" style="left:1742px;top:77.5px;" width="10.5" height="6" viewBox="0 0 10.5 6"><path d="M0 0H10.5L5.25 6Z" fill="#a4a8b0"/></svg>
<svg class="ic" style="left:1778px;top:71px;" width="19.5" height="19.5" viewBox="0 0 19.5 19.5"><rect x="0" y="0" width="11" height="19.5" rx="1.2" fill="#5b6984"/><rect x="14" y="0" width="5.5" height="19.5" rx="1.2" fill="#5b6984"/></svg>
<svg class="ic" style="left:1826.7px;top:68.5px;" width="8" height="26" viewBox="0 0 8 26"><circle cx="4" cy="4.0" r="2.7" fill="#5a606c"/><circle cx="4" cy="12.5" r="2.7" fill="#5a606c"/><circle cx="4" cy="21.0" r="2.7" fill="#5a606c"/></svg>
<div class="b" style="left:935px;top:106.5px;width:924.00px;height:1.00px;background:#e4e4e4;"></div>
<svg class="ic" style="left:1840.5px;top:117.5px;" width="11" height="6" viewBox="0 0 11 6"><path d="M0 6H11L5.5 0Z" fill="#d9d9d9"/></svg>
<div class="b" style="left:1843px;top:427px;width:7.50px;height:24.00px;background:#cfcfcf;border-radius:4px;"></div>
<svg class="ic" style="left:1841px;top:994.5px;" width="11" height="6" viewBox="0 0 11 6"><path d="M0 0H11L5.5 6Z" fill="#dcdcdc"/></svg>
<div class="b" style="left:1774px;top:144.5px;width:43.00px;height:36.00px;background:#b7d0ee;"></div>
<div class="b" style="left:959.5px;top:181.8px;width:852.50px;height:36.20px;background:#b7d0ee;"></div>
<div class="b" style="left:959.5px;top:218px;width:370.50px;height:36.80px;background:#b7d0ee;"></div>
<div class="t " style="left:960.00px;top:114.62px;font-size:23.80px;color:#1c1c1c;width:852px;text-align:justify;text-align-last:justify;">was Azubah the daughter of Shilhi. <span class="sup">32</span> He walked in the way of Asa his father and</div>
<div class="t " style="left:960.00px;top:151.21px;font-size:23.80px;color:#1c1c1c;width:853px;text-align:justify;text-align-last:justify;">did not turn aside from it, doing what was right in the sight of the L<span class="sc">ORD</span>. <span class="stk"><svg width="19" height="18" viewBox="0 0 19 18"><path d="M0 0H19V11L12 18H0Z" fill="#f9c934"/><path d="M19 11L12 18V11Z" fill="#c9a227"/></svg></span> <span class="sup">33</span> <span style="color:#3a5877">The</span></div>
<div class="t " style="left:960.00px;top:191.31px;font-size:23.80px;color:#3a5877;width:852px;text-align:justify;text-align-last:justify;">high places, however, were not taken away; the people had not yet <span class="stk"><svg width="19" height="18" viewBox="0 0 19 18"><path d="M0 0H19V11L12 18H0Z" fill="#b5b48a"/><path d="M19 11L12 18V11Z" fill="#96966c"/></svg></span> set their</div>
<div class="t " style="left:960.00px;top:228.92px;font-size:22.97px;color:#3a5877;">hearts upon the God of their fathers.</div>
<div class="t " style="left:970.00px;top:265.40px;font-size:23.80px;color:#1c1c1c;width:842px;text-align:justify;text-align-last:justify;"><span class="sup">34</span> Now the rest of the acts of Jehoshaphat, from first to last, are written in the</div>
<div class="t " style="left:960.00px;top:304.51px;font-size:23.80px;color:#1c1c1c;width:858.5px;text-align:justify;text-align-last:justify;transform:scaleX(0.9924);">chronicles of Jehu the son of Hanani, which are recorded in the Book of the Kings</div>
<div class="t " style="left:960.00px;top:344.11px;font-size:22.43px;color:#1c1c1c;">of Israel.</div>
<div class="t " style="left:961.30px;top:399.90px;font-size:26.77px;color:#111;font-weight:700;-webkit-text-stroke-width:0;font-style:italic;-webkit-text-stroke-width:0.35px;transform:scaleX(0.9326);">The End of Jehoshaphat’s Reign</div>
<div class="t " style="left:970.00px;top:455.81px;font-size:23.80px;color:#1c1c1c;width:842px;text-align:justify;text-align-last:justify;"><span class="sup">35</span> After this Jehoshaphat king of Judah joined with Ahaziah king of Israel, who</div>
<div class="t " style="left:960.00px;top:492.62px;font-size:23.80px;color:#1c1c1c;width:852px;text-align:justify;text-align-last:justify;">acted wickedly. <span class="sup">36</span> He joined him in building ships to go to Tarshish, and they built</div>
<div class="t " style="left:960.00px;top:529.31px;font-size:23.80px;color:#1c1c1c;width:880.2px;text-align:justify;text-align-last:justify;transform:scaleX(0.9679);">the ships in Ezion-geber. <span class="sup">37</span> Then Eliezer the son of Dodavahu of Mareshah prophe-</div>
<div class="t " style="left:960.00px;top:569.51px;font-size:23.80px;color:#1c1c1c;width:853.5px;text-align:justify;text-align-last:justify;transform:scaleX(0.9982);">sied against Jehoshaphat, saying, “<span class="stk" style="width:28px"><svg width="26" height="22" viewBox="0 0 26 22" style="top:-19px;left:1px"><rect x="1.5" y="4.5" width="1.6" height="2.2" fill="#8e929c"/><rect x="4.6" y="2" width="1.6" height="6.5" fill="#8e929c"/><rect x="8" y="0.8" width="1.7" height="9" fill="#8e929c"/><circle cx="17.5" cy="4.5" r="3.2" stroke="#a0a6b0" stroke-width="1.5" fill="none"/><path d="M13.2 10.8H22L20.8 18.3H14.4Z" stroke="#a0a6b0" stroke-width="1.5" fill="none"/></svg></span>Because you have joined with Ahaziah, the</div>
<div class="t " style="left:960.00px;top:607.62px;font-size:23.80px;color:#1c1c1c;width:867.7px;text-align:justify;text-align-last:justify;transform:scaleX(0.9820);">L<span class="sc">ORD</span> will destroy what you have made.” And the ships were wrecked and were not</div>
<div class="t " style="left:960.00px;top:644.70px;font-size:22.89px;color:#1c1c1c;">able to go to Tarshish.</div>
<div class="t " style="left:960.00px;top:701.61px;font-size:26.87px;color:#111;font-weight:700;-webkit-text-stroke-width:0;font-style:italic;-webkit-text-stroke-width:0.35px;transform:scaleX(0.9438);">Jehoram Reigns in Judah</div>
<div class="t " style="left:960.50px;top:757.61px;font-size:49.00px;color:#1c1c1c;-webkit-text-stroke-width:0;transform:scaleX(0.8346);">21</div>
<div class="t " style="left:1018.50px;top:778.62px;font-size:23.80px;color:#1c1c1c;width:799.0px;text-align:justify;text-align-last:justify;transform:scaleX(0.9932);">Jehoshaphat slept with his fathers and was buried with his fathers in the city</div>
<div class="t " style="left:960.00px;top:820.62px;font-size:23.80px;color:#1c1c1c;width:863.0px;text-align:justify;text-align-last:justify;transform:scaleX(0.9873);">of David, and Jehoram his son reigned in his place. <span class="sup">2</span> He had brothers, the sons of</div>
<div class="t " style="left:960.00px;top:860.12px;font-size:23.80px;color:#1c1c1c;width:852px;text-align:justify;text-align-last:justify;">Jehoshaphat: Azariah, Jehiel, Zechariah, Azariah, Michael, and Shephatiah; all</div>
<div class="t " style="left:960.00px;top:894.12px;font-size:23.80px;color:#1c1c1c;width:861.6px;text-align:justify;text-align-last:justify;transform:scaleX(0.9888);">these were the sons of Jehoshaphat king of Israel.<span class="fn">3</span> <span class="sup">3</span> Their father gave them great</div>
<div class="t " style="left:960.00px;top:933.62px;font-size:23.80px;color:#1c1c1c;width:852px;text-align:justify;text-align-last:justify;">gifts of silver, gold, and valuable possessions, together with fortified cities in</div>
<div class="t " style="left:960.00px;top:969.71px;font-size:23.80px;color:#1c1c1c;width:873.6px;text-align:justify;text-align-last:justify;transform:scaleX(0.9753);">Judah, but he gave the kingdom to Jehoram, because he was the firstborn. <span class="sup">4</span> When</div>
<div class="b" style="left:1383.4px;top:228px;width:472.20px;height:136.60px;border:7.5px solid #f0640c;border-radius:4px;box-sizing:border-box;"></div>
<div class="b" style="left:1395.5px;top:236.5px;width:449.00px;height:114.50px;background:#fff;border-radius:11px;box-shadow:0 2px 4px rgba(0,0,0,0.22),0 0 1px rgba(0,0,0,0.25);"></div>
<div class="t " style="left:1413.40px;top:246.61px;font-size:19.23px;color:#1c1c1c;">Jehoshaphat had initiated reform (2 Chron 17:6),</div>
<div class="t " style="left:1413.40px;top:269.62px;font-size:19.40px;color:#1c1c1c;">but it was only external. The people rebuilt the</div>
<div class="t " style="left:1413.40px;top:293.30px;font-size:19.00px;color:#1c1c1c;">high places because they had not experienced</div>
<div class="t " style="left:1413.40px;top:317.00px;font-size:19.56px;color:#1c1c1c;">internal renewal.</div>
</body></html>
